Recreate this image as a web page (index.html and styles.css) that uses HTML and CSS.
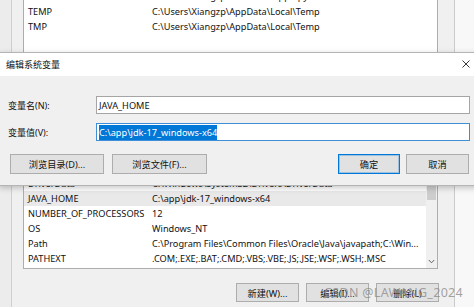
FILE: index.html
```html
<!DOCTYPE html>
<html lang="zh-CN">
<head>
  <meta charset="UTF-8">
  <title>编辑系统变量</title>
  <link rel="stylesheet" href="styles.css">
</head>
<body>
  <div class="screen">
    <div class="side-left"></div>

    <div class="env-window">
      <div class="var-list user-list">
        <div class="rows">
          <div class="row"><span class="name">OneDrive</span><span class="value">C:\Users\Xiangzp\OneDrive\apps\py</span></div>
          <div class="row"><span class="name">TEMP</span><span class="value">C:\Users\Xiangzp\AppData\Local\Temp</span></div>
          <div class="row"><span class="name">TMP</span><span class="value">C:\Users\Xiangzp\AppData\Local\Temp</span></div>
        </div>
      </div>

      <div class="var-list sys-list">
        <div class="rows">
          <div class="row"><span class="name">ComSpec</span><span class="value">C:\Windows\system32\cmd.exe</span></div>
          <div class="row"><span class="name">DriverData</span><span class="value">C:\Windows\System32\Drivers\DriverData</span></div>
          <div class="row selected"><span class="name">JAVA_HOME</span><span class="value">C:\app\jdk-17_windows-x64</span></div>
          <div class="row"><span class="name">NUMBER_OF_PROCESSORS</span><span class="value">12</span></div>
          <div class="row"><span class="name">OS</span><span class="value">Windows_NT</span></div>
          <div class="row"><span class="name">Path</span><span class="value">C:\Program Files\Common Files\Oracle\Java\javapath;C:\Win...</span></div>
          <div class="row"><span class="name">PATHEXT</span><span class="value">.COM;.EXE;.BAT;.CMD;.VBS;.VBE;.JS;.JSE;.WSF;.WSH;.MSC</span></div>
        </div>
        <div class="scrollbar">
          <div class="thumb"></div>
          <div class="arrow">
            <svg width="7" height="5" viewBox="0 0 7 5"><path d="M0.8 1 L3.5 3.8 L6.2 1" fill="none" stroke="#606060" stroke-width="1"/></svg>
          </div>
        </div>
      </div>

      <div class="env-buttons">
        <button class="win-btn">新建(W)...</button>
        <button class="win-btn">编辑(I)...</button>
        <button class="win-btn">删除(L)</button>
      </div>
    </div>

    <div class="side-right"></div>

    <div class="dialog">
      <div class="dialog-title">
        <span>编辑系统变量</span>
        <span class="close">
          <svg width="8" height="8" viewBox="0 0 8 8"><path d="M0.5 0.5 L7.5 7.5 M7.5 0.5 L0.5 7.5" stroke="#222" stroke-width="0.9"/></svg>
        </span>
      </div>
      <div class="dialog-body">
        <div class="field">
          <label>变量名(N):</label>
          <div class="input">JAVA_HOME</div>
        </div>
        <div class="field second">
          <label>变量值(V):</label>
          <div class="input focused"><span class="sel">C:\app\jdk-17_windows-x64</span></div>
        </div>
        <div class="dialog-buttons">
          <div class="left-group">
            <button class="win-btn browse">浏览目录(D)...</button>
            <button class="win-btn browse wide">浏览文件(F)...</button>
          </div>
          <div class="right-group">
            <button class="win-btn small default">确定</button>
            <button class="win-btn small">取消</button>
          </div>
        </div>
      </div>
    </div>

    <div class="watermark">CSDN @LAWANG_2024</div>
  </div>
</body>
</html>
```

FILE: styles.css
```css
* {
  box-sizing: border-box;
}
body {
  margin: 0;
  background: #f0f0f0;
  font-family: "Noto Sans", "Noto Sans CJK SC", sans-serif;
  font-size: 9.2px;
  color: #111;
}
.screen {
  position: relative;
  display: flex;
  width: 474px;
  height: 307px;
  overflow: hidden;
}
.side-left {
  width: 12px;
  background: #ececec;
  border-right: 1px solid #cfcfcf;
}
.env-window {
  width: 443px;
  padding: 0 15px 0 11px;
  background: #f0f0f0;
  border-right: 1px solid #cbcbcb;
}
.side-right {
  flex: 1;
  background: #f8f8f8;
}

/* lists */
.var-list {
  width: 415px;
  background: #fff;
  border: 1px solid #adadad;
  display: flex;
}
.user-list {
  margin-top: -12px;
  height: 65px;
}
.sys-list {
  margin-top: 107px;
  height: 109px;
}
.rows {
  flex: 1;
}
.row {
  display: flex;
  height: 15px;
  line-height: 15px;
  padding-left: 4px;
  white-space: nowrap;
  overflow: hidden;
}
.row.selected {
  background: #e9e9e9;
}
.name {
  width: 124px;
  flex-shrink: 0;
}
.scrollbar {
  width: 11px;
  background: #f0f0f0;
  display: flex;
  flex-direction: column;
  justify-content: space-between;
  align-items: center;
}
.thumb {
  width: 9px;
  height: 39px;
  background: #cdcdcd;
}
.arrow {
  height: 13px;
  display: flex;
  align-items: center;
}

.env-buttons {
  display: flex;
  justify-content: flex-end;
  gap: 7px;
  margin-top: 14px;
}
.env-buttons .win-btn {
  width: 63px;
  height: 19px;
}

/* buttons */
.win-btn {
  font-family: inherit;
  font-size: 9.2px;
  color: #111;
  background: #e1e1e1;
  border: 1px solid #adadad;
  padding: 0;
  height: 20px;
}
.win-btn.browse {
  width: 94px;
}
.win-btn.wide {
  width: 95px;
}
.win-btn.small {
  width: 62px;
}
.win-btn.default {
  border-color: #0078d7;
  box-shadow: inset 0 0 0 1px rgba(0, 120, 215, 0.3);
}

/* dialog */
.dialog {
  position: absolute;
  top: 52px;
  left: -1px;
  width: 480px;
  height: 134px;
  background: #f0f0f0;
  border: 1px solid #b5b5b5;
  box-shadow: 0 2px 6px rgba(0, 0, 0, 0.22);
}
.dialog-title {
  height: 23px;
  background: #fff;
  display: flex;
  justify-content: space-between;
  align-items: center;
  padding-left: 6px;
  font-size: 9px;
}
.close {
  width: 24px;
  display: flex;
  justify-content: center;
  margin-top: -2px;
}
.dialog-body {
  padding: 20px 8px 11px 8px;
}
.field {
  display: flex;
  align-items: center;
  height: 18px;
}
.field.second {
  margin-top: 9px;
}
.field label {
  width: 88px;
  font-size: 9px;
}
.input {
  flex: 1;
  height: 18px;
  background: #fff;
  border: 1px solid #a5a5a5;
  padding: 0 2px;
  line-height: 15px;
  display: flex;
  align-items: center;
}
.input.focused {
  border-color: #3f8fd8;
}
.sel {
  background: #0078d7;
  color: #fff;
  height: 15px;
  line-height: 15px;
}
.dialog-buttons {
  display: flex;
  justify-content: space-between;
  margin-top: 13px;
  padding-left: 2px;
  padding-right: 1px;
}
.left-group,
.right-group {
  display: flex;
}
.left-group {
  gap: 8px;
}
.right-group {
  gap: 6px;
}
.right-group .win-btn:last-child {
  width: 63px;
}

.watermark {
  position: absolute;
  top: 284px;
  right: 11px;
  font-size: 12.5px;
  color: rgba(140, 140, 140, 0.8);
  letter-spacing: 0.3px;
}
```
